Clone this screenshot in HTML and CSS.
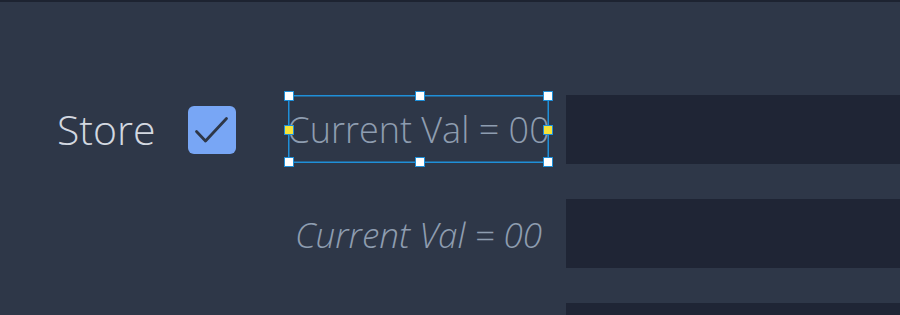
FILE: index.html
```html
<!DOCTYPE html>
<html>
<head>
<meta charset="utf-8">
<link rel="stylesheet" href="styles.css">
</head>
<body>
<div class="page">
  <div class="grid">
    <div class="label-cell">
      <span class="label">Store</span>
      <span class="checkbox">
        <svg width="48" height="48" viewBox="0 0 48 48"><path d="M8.5 25.5 L17.5 35 L38.5 12.5" fill="none" stroke="#2e3748" stroke-width="2.8" stroke-linecap="round" stroke-linejoin="round"/></svg>
      </span>
    </div>
    <div class="value-cell selected">
      <span class="value">Current Val = 00</span>
      <span class="handle tl"></span><span class="handle tm"></span><span class="handle tr"></span>
      <span class="handle ml yellow"></span><span class="handle mr yellow"></span>
      <span class="handle bl"></span><span class="handle bm"></span><span class="handle br"></span>
    </div>
    <div class="bar"></div>

    <div class="label-cell"></div>
    <div class="value-cell">
      <span class="value italic">Current Val = 00</span>
    </div>
    <div class="bar"></div>

    <div class="label-cell"></div>
    <div class="value-cell"></div>
    <div class="bar"></div>
  </div>
</div>
</body>
</html>
```
FILE: styles.css
```css
html, body {
  margin: 0;
  padding: 0;
  background: #2e3748;
  overflow: hidden;
}
.page {
  width: 900px;
  height: 315px;
  overflow: hidden;
  box-sizing: border-box;
  border-top: 2px solid #1d2331;
  padding-top: 93px;
  font-family: "Open Sans", "Noto Sans", sans-serif;
  font-weight: 300;
}
.grid {
  display: grid;
  grid-template-columns: 288px 261px 351px;
  grid-auto-rows: 69px;
  row-gap: 35px;
}
.label-cell {
  display: flex;
  align-items: center;
  padding-left: 57px;
}
.label {
  font-size: 41px;
  color: #d3d8e0;
  width: 131px;
  line-height: 1;
}
.checkbox {
  width: 48px;
  height: 48px;
  border-radius: 6px;
  background: #78a6f5;
  display: block;
}
.checkbox svg { display: block; }
.value-cell {
  position: relative;
  display: flex;
  align-items: center;
  justify-content: center;
  box-sizing: border-box;
  height: 68px;
  padding-top: 2px;
}
.value-cell.selected {
  box-shadow: inset 0 0 0 1.5px #1f8fd8;
}
.value {
  font-size: 36px;
  color: #8e9db0;
  white-space: nowrap;
  line-height: 1;
}
.value.italic { font-size: 35px; font-style: italic; }
.bar {
  background: #1f2535;
  margin-left: 17px;
}
.handle {
  position: absolute;
  width: 10px;
  height: 10px;
  background: #ffffff;
  border: 1.5px solid #1f8fd8;
  box-sizing: border-box;
  margin: -4px 0 0 -4px;
}
.handle.yellow { background: #f5e33a; }
.tl { left: 0; top: 0; }
.tm { left: 50%; top: 0; }
.tr { left: calc(100% - 2px); top: 0; }
.ml { left: 0; top: 50%; }
.mr { left: calc(100% - 2px); top: 50%; }
.bl { left: 0; top: calc(100% - 2px); }
.bm { left: 50%; top: calc(100% - 2px); }
.br { left: calc(100% - 2px); top: calc(100% - 2px); }
```
